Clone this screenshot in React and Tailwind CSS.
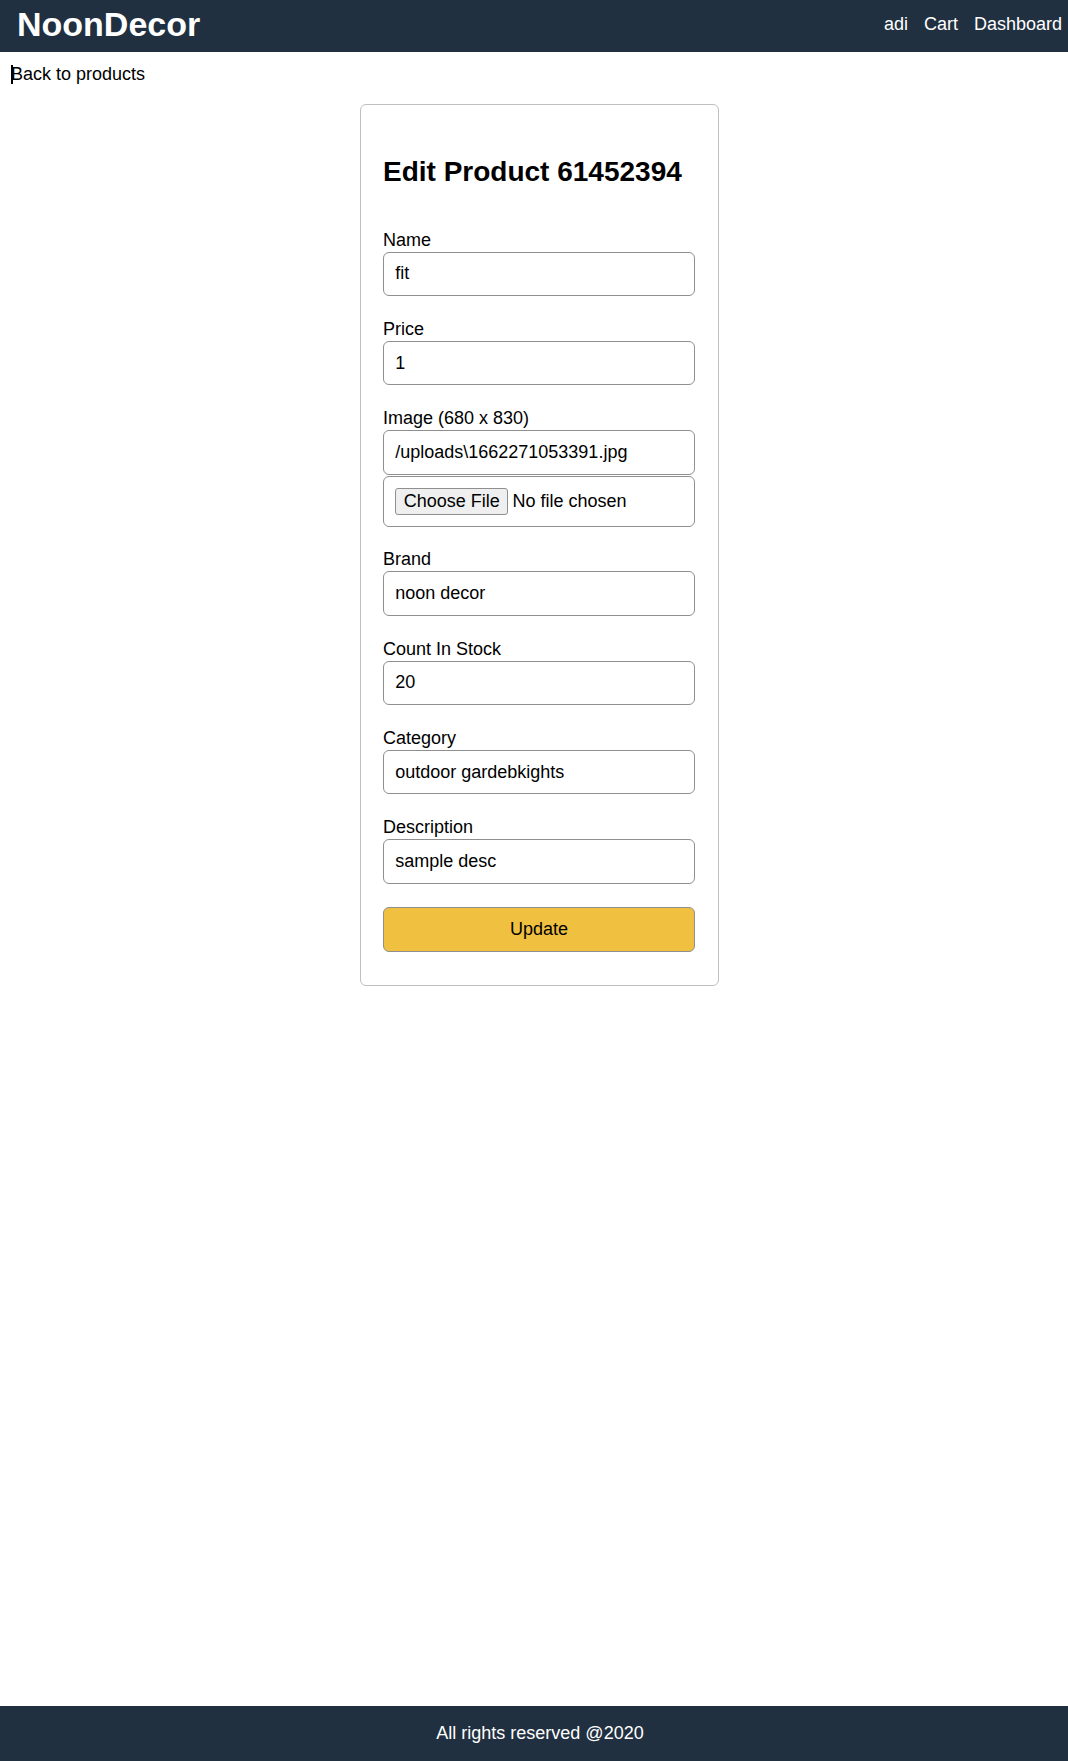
import { useState } from "react";

const fields = [
    { key: "name", label: "Name", value: "fit" },
    { key: "price", label: "Price", value: "1" },
    { key: "image", label: "Image (680 x 830)", value: "/uploads\\1662271053391.jpg", file: true },
    { key: "brand", label: "Brand", value: "noon decor" },
    { key: "countInStock", label: "Count In Stock", value: "20" },
    { key: "category", label: "Category", value: "outdoor gardebkights" },
    { key: "description", label: "Description", value: "sample desc" },
];

const Header = () => (
    <header className="flex h-[52px] items-start justify-between bg-[#203040] pl-[17px] pr-[6px] text-white">
        <a href="#" className="mt-[4.7px] text-[34px] font-bold leading-[normal]">
            NoonDecor
        </a>
        <nav className="mt-[14.4px] flex gap-[16px] text-[18px] leading-[normal]">
            <a href="#">adi</a>
            <a href="#">Cart</a>
            <a href="#">Dashboard</a>
        </nav>
    </header>
);

const Footer = () => (
    <footer className="flex h-[55px] items-center justify-center bg-[#203040] pl-[12px] pb-[1px] text-[18px] leading-[normal] text-white">
        All rights reserved @2020
    </footer>
);

const EditProduct = () => {
    const [values, setValues] = useState(() =>
        Object.fromEntries(fields.map((f) => [f.key, f.value]))
    );

    const handleChange = (key) => (e) => {
        setValues((prev) => ({ ...prev, [key]: e.target.value }));
    };

    return (
        <div className="flex justify-center pl-[11px]">
            <form
                className="mt-[18.2px] w-[359px] rounded-[6px] border border-[#c0c0c0] bg-white pl-[22px] pr-[23px] pt-[22px] pb-[32.7px]"
                onSubmit={(e) => e.preventDefault()}
            >
                <h1 className="mt-[29px] mb-[41px] text-[28px] font-bold leading-[normal]">
                    Edit Product 61452394
                </h1>
                <div className="flex flex-col gap-[21.5px]">
                    {fields.map((f) => (
                        <div key={f.key} className="flex flex-col">
                            <label htmlFor={f.key} className="leading-[23px]">
                                {f.label}
                            </label>
                            <input
                                id={f.key}
                                type="text"
                                value={values[f.key]}
                                onChange={handleChange(f.key)}
                                className="h-[44.7px] rounded-[6px] border border-[#8f8f8f] px-[11.2px] leading-[normal] outline-none"
                            />
                            {f.file && (
                                <div className="mt-[1.7px] flex h-[50.6px] items-center rounded-[6px] border border-[#8f8f8f] px-[11.2px]">
                                    <button
                                        type="button"
                                        className="mr-[4px] h-[26.7px] rounded-[3px] border border-[#8f8f8f] bg-[#efefef] px-[7.6px] leading-[normal]"
                                    >
                                        Choose File
                                    </button>
                                    <span>No file chosen</span>
                                </div>
                            )}
                        </div>
                    ))}
                    <button
                        type="submit"
                        className="mt-[1.8px] h-[45px] rounded-[6px] border border-[#8f8f8f] bg-[#f0c040] leading-[normal]"
                    >
                        Update
                    </button>
                </div>
            </form>
        </div>
    );
};

const App = () => {
    return (
        <div className="flex min-h-[1761px] flex-col bg-white font-['Liberation_Sans',Arial,sans-serif] text-[18px] leading-[normal] text-black">
            <Header />
            <main className="flex-1">
                <div className="relative mt-[12.4px] pl-[11px]">
                    <span className="absolute left-[11px] top-[1px] h-[19px] w-[1.5px] bg-black" />
                    <a href="#" className="leading-[normal]">Back to products</a>
                </div>
                <EditProduct />
            </main>
            <Footer />
        </div>
    );
};

export default App;
